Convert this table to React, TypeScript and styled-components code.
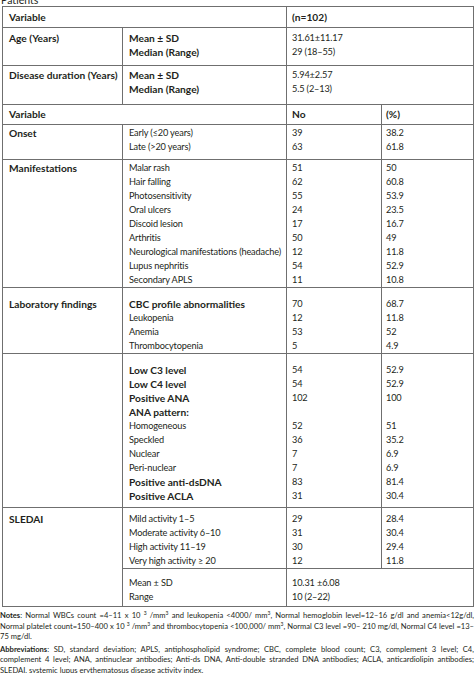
import React from "react";
import styled, { createGlobalStyle } from "styled-components";

const Global = createGlobalStyle`
  html, body { margin: 0; padding: 0; background: #fff; }
  body { font-family: Lato, "Liberation Sans", sans-serif; color: #231f20; overflow: hidden; }
`;

const Page = styled.div`
  width: 474px;
  height: 673px;
  overflow: hidden;
`;

const Caption = styled.div`
  font-size: 10.5px;
  line-height: 12px;
  margin-top: -6px;
  padding-left: 1px;
  height: 12px;
`;

const Table = styled.table`
  margin-left: 2px;
  width: 471px;
  border-collapse: collapse;
  table-layout: fixed;
  line-height: 14px;
  border-left: 1px solid #a8a8a8;
  border-right: 1px solid #a8a8a8;
`;

const Col = styled.col<{ $w: number }>`
  width: ${(p) => p.$w}px;
`;

const Cell = styled.td<{ $pt: number; $pb: number; $pl: number }>`
  border: 1px solid #6f6f6f;
  vertical-align: top;
  padding: ${(p) => p.$pt}px 0 ${(p) => p.$pb}px ${(p) => p.$pl}px;
  white-space: nowrap;
`;

const Line = styled.div<{ $bold?: boolean }>`
  font-weight: ${(p) => (p.$bold ? 700 : 400)};
  font-size: ${(p) => (p.$bold ? 10.2 : 9.2)}px;
  letter-spacing: ${(p) => (p.$bold ? 0 : -0.15)}px;
  height: 14px;
`;

const Notes = styled.div`
  font-size: 7.6px;
  line-height: 10.5px;
  text-align: justify;
  padding: 3px 0 0 0;
  & p { margin: 0 0 2px 0; }
  & b { font-weight: 700; }
  & sup { font-size: 5px; line-height: 0; vertical-align: 3px; }
`;

type L = { t: string; b?: boolean };
const PL = [6, 6, 5, 4];
const WIDTHS = [120, 164, 95, 92];

function Lines({ items }: { items: L[] }) {
  return (
    <>
      {items.map((l, i) => (
        <Line key={i} $bold={l.b}>
          {l.t}
        </Line>
      ))}
    </>
  );
}

const n = (s: string): L => ({ t: s });
const bb = (s: string): L => ({ t: s, b: true });

type Row = {
  pt: number;
  pb: number;
  cells: { lines: L[]; span?: number; rowSpan?: number; col: number }[];
};

const rows: Row[] = [
  { pt: 3, pb: 3, cells: [{ col: 0, span: 2, lines: [bb("Variable")] }, { col: 2, span: 2, lines: [bb("(n=102)")] }] },
  {
    pt: 3, pb: 6,
    cells: [
      { col: 0, lines: [bb("Age (Years)")] },
      { col: 1, lines: [bb("Mean ± SD"), bb("Median (Range)")] },
      { col: 2, span: 2, lines: [n("31.61±11.17"), n("29 (18–55)")] },
    ],
  },
  {
    pt: 2, pb: 8,
    cells: [
      { col: 0, lines: [bb("Disease duration (Years)")] },
      { col: 1, lines: [bb("Mean ± SD"), bb("Median (Range)")] },
      { col: 2, span: 2, lines: [n("5.94±2.57"), n("5.5 (2–13)")] },
    ],
  },
  {
    pt: 2, pb: 3,
    cells: [
      { col: 0, span: 2, lines: [bb("Variable")] },
      { col: 2, lines: [bb("No")] },
      { col: 3, lines: [bb("(%)")] },
    ],
  },
  {
    pt: 1, pb: 5,
    cells: [
      { col: 0, lines: [bb("Onset")] },
      { col: 1, lines: [n("Early (≤20 years)"), n("Late (>20 years)")] },
      { col: 2, lines: [n("39"), n("63")] },
      { col: 3, lines: [n("38.2"), n("61.8")] },
    ],
  },
  {
    pt: 1, pb: 0,
    cells: [
      { col: 0, lines: [bb("Manifestations")] },
      {
        col: 1,
        lines: [
          n("Malar rash"), n("Hair falling"), n("Photosensitivity"), n("Oral ulcers"), n("Discoid lesion"),
          n("Arthritis"), n("Neurological manifestations (headache)"), n("Lupus nephritis"), n("Secondary APLS"),
        ],
      },
      { col: 2, lines: ["51", "62", "55", "24", "17", "50", "12", "54", "11"].map(n) },
      { col: 3, lines: ["50", "60.8", "53.9", "23.5", "16.7", "49", "11.8", "52.9", "10.8"].map(n) },
    ],
  },
  {
    pt: 9, pb: 0,
    cells: [
      { col: 0, lines: [bb("Laboratory findings")] },
      { col: 1, lines: [bb("CBC profile abnormalities"), n("Leukopenia"), n("Anemia"), n("Thrombocytopenia")] },
      { col: 2, lines: ["70", "12", "53", "5"].map(n) },
      { col: 3, lines: ["68.7", "11.8", "52", "4.9"].map(n) },
    ],
  },
  {
    pt: 9, pb: 4,
    cells: [
      { col: 0, lines: [] },
      {
        col: 1,
        lines: [
          bb("Low C3 level"), bb("Low C4 level"), bb("Positive ANA"), bb("ANA pattern:"), n("Homogeneous"),
          n("Speckled"), n("Nuclear"), n("Peri-nuclear"), bb("Positive anti-dsDNA"), bb("Positive ACLA"),
        ],
      },
      { col: 2, lines: ["54", "54", "102", "", "52", "36", "7", "7", "83", "31"].map(n) },
      { col: 3, lines: ["52.9", "52.9", "100", "", "51", "35.2", "6.9", "6.9", "81.4", "30.4"].map(n) },
    ],
  },
  {
    pt: 4, pb: 0,
    cells: [
      { col: 0, rowSpan: 2, lines: [bb("SLEDAI")] },
      { col: 1, lines: [n("Mild activity 1–5"), n("Moderate activity 6–10"), n("High activity 11–19"), n("Very high activity ≥ 20")] },
      { col: 2, lines: ["29", "31", "30", "12"].map(n) },
      { col: 3, lines: ["28.4", "30.4", "29.4", "11.8"].map(n) },
    ],
  },
  {
    pt: 7, pb: 2,
    cells: [
      { col: 1, lines: [n("Mean ± SD"), n("Range")] },
      { col: 2, span: 2, lines: [n("10.31 ±6.08"), n("10 (2–22)")] },
    ],
  },
];

export default function App() {
  return (
    <Page>
      <Global />
      <Caption>Patients</Caption>
      <Table>
        <colgroup>
          {WIDTHS.map((w, i) => (
            <Col key={i} $w={w} />
          ))}
        </colgroup>
        <tbody>
          {rows.map((r, i) => (
            <tr key={i}>
              {r.cells.map((c) => (
                <Cell
                  key={c.col}
                  colSpan={c.span}
                  rowSpan={c.rowSpan}
                  $pt={c.rowSpan ? 4 : r.pt}
                  $pb={r.pb}
                  $pl={PL[c.col]}
                >
                  <Lines items={c.lines} />
                </Cell>
              ))}
            </tr>
          ))}
        </tbody>
      </Table>
      <Notes>
        <p>
          <b>Notes</b>: Normal WBCs count =4–11 x 10 <sup>3</sup> /mm<sup>3</sup> and leukopenia &lt;4000/ mm<sup>3</sup>,
          Normal hemoglobin level=12–16 g/dl and anemia&lt;12g/dl, Normal platelet count=150–400 x 10 <sup>3</sup> /mm
          <sup>3</sup> and thrombocytopenia &lt;100,000/ mm<sup>3</sup>, Normal C3 level =90– 210 mg/dl, Normal C4 level
          =13–75 mg/dl.
        </p>
        <p>
          <b>Abbreviations</b>: SD, standard deviation; APLS, antiphospholipid syndrome; CBC, complete blood count; C3,
          complement 3 level; C4, complement 4 level; ANA, antinuclear antibodies; Anti-ds DNA, Anti-double stranded DNA
          antibodies; ACLA, anticardiolipin antibodies; SLEDAI, systemic lupus erythematosus disease activity index.
        </p>
      </Notes>
    </Page>
  );
}
